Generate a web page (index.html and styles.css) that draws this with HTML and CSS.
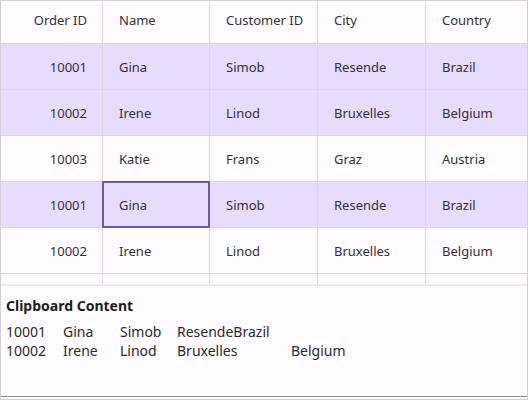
FILE: index.html
```html
<!DOCTYPE html>
<html>
<head>
<meta charset="utf-8">
<link rel="stylesheet" href="styles.css">
</head>
<body>
<div class="frame">
  <div class="grid">
    <div class="row head">
      <div class="cell num">Order ID</div>
      <div class="cell">Name</div>
      <div class="cell">Customer ID</div>
      <div class="cell">City</div>
      <div class="cell">Country</div>
    </div>
    <div class="row sel">
      <div class="cell num">10001</div>
      <div class="cell">Gina</div>
      <div class="cell">Simob</div>
      <div class="cell">Resende</div>
      <div class="cell">Brazil</div>
    </div>
    <div class="row sel">
      <div class="cell num">10002</div>
      <div class="cell">Irene</div>
      <div class="cell">Linod</div>
      <div class="cell">Bruxelles</div>
      <div class="cell">Belgium</div>
    </div>
    <div class="row">
      <div class="cell num">10003</div>
      <div class="cell">Katie</div>
      <div class="cell">Frans</div>
      <div class="cell">Graz</div>
      <div class="cell">Austria</div>
    </div>
    <div class="row sel">
      <div class="cell num">10001</div>
      <div class="cell current">Gina</div>
      <div class="cell">Simob</div>
      <div class="cell">Resende</div>
      <div class="cell">Brazil</div>
    </div>
    <div class="row">
      <div class="cell num">10002</div>
      <div class="cell">Irene</div>
      <div class="cell">Linod</div>
      <div class="cell">Bruxelles</div>
      <div class="cell">Belgium</div>
    </div>
    <div class="row">
      <div class="cell num"></div>
      <div class="cell"></div>
      <div class="cell"></div>
      <div class="cell"></div>
      <div class="cell"></div>
    </div>
  </div>
  <div class="clip">
    <div class="clip-title">Clipboard Content</div>
    <pre class="clip-text">10001	Gina	Simob	ResendeBrazil
10002	Irene	Linod	Bruxelles	Belgium</pre>
  </div>
</div>
</body>
</html>
```

FILE: styles.css
```css
html, body {
  margin: 0;
  padding: 0;
  background: #ffffff;
}
body {
  width: 528px;
  height: 400px;
  overflow: hidden;
  font-family: "Noto Sans", "Open Sans", sans-serif;
  color: #333038;
}
.frame {
  width: 526px;
  height: 398px;
  border: 1px solid #d4d2d6;
  background: #fffbfe;
  display: flex;
  flex-direction: column;
}
.grid {
  height: 283px;
  overflow: hidden;
  border-bottom: 2px solid #ece8ee;
  flex: none;
}
.row {
  display: flex;
  height: 45px;
  border-bottom: 1px solid #dcd5e4;
  background: #fffbfe;
}
.row.head {
  height: 42px;
}
.row.head .cell {
  padding-bottom: 4px;
}
.row.sel {
  background: #e8dcfd;
}
.cell {
  box-sizing: border-box;
  display: flex;
  align-items: center;
  padding-left: 16px;
  font-size: 13px;
  border-right: 1px solid #dcd5e4;
  width: 108px;
  flex: none;
}
.cell:nth-child(1) { width: 102px; }
.cell:nth-child(2) { width: 107px; }
.cell:nth-child(5) { flex: 1; width: auto; border-right: none; }
.cell.num {
  justify-content: flex-end;
  padding-left: 0;
  padding-right: 15px;
}
.cell.current {
  border: 2px solid #6e56b0;
  border-radius: 1px;
  margin: -1px 0 -1px -1px;
  padding-left: 15px;
  width: 108px;
  height: 47px;
}
.clip {
  flex: 1;
  border-bottom: 1px solid #8d8a90;
  margin-bottom: 2px;
  padding: 10px 0 0 5px;
}
.clip-title {
  font-weight: bold;
  font-size: 14px;
  color: #1c1b1f;
  line-height: 20px;
}
.clip-text {
  margin: 6px 0 0 0;
  font-family: "Noto Sans", "Open Sans", sans-serif;
  font-size: 14px;
  line-height: 19px;
  tab-size: 57px;
  color: #2b2930;
}
```
